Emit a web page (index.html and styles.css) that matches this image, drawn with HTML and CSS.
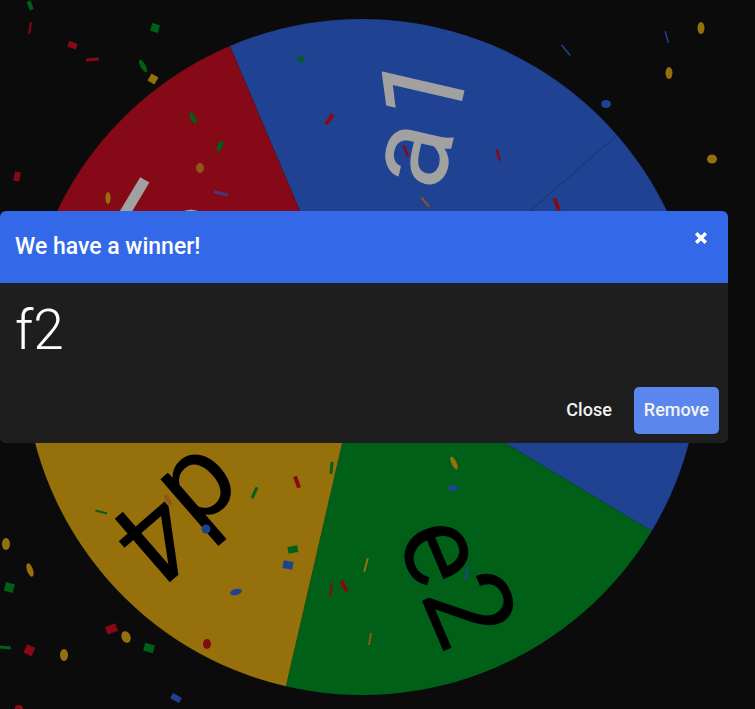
FILE: index.html
```html
<!DOCTYPE html>
<html lang="en">
<head>
<meta charset="utf-8">
<title>We have a winner!</title>
<link rel="stylesheet" href="styles.css">
</head>
<body>
<svg class="wheel" width="755" height="709" viewBox="0 0 755 709" xmlns="http://www.w3.org/2000/svg">
  <g class="segments">
    <path class="seg-blue" d="M362,357 L229.9,45.9 A338,338 0 0 1 617.1,135.2 Z"/>
    <path class="seg-blue" d="M362,357 L617.1,135.2 A338,338 0 0 1 651.7,531.1 Z"/>
    <path class="seg-green" d="M362,357 L651.7,531.1 A338,338 0 0 1 285.9,686.3 Z"/>
    <path class="seg-yellow" d="M362,357 L285.9,686.3 A338,338 0 0 1 25.3,386.5 Z"/>
    <path class="seg-red" d="M362,357 L25.3,386.5 A338,338 0 0 1 229.9,45.9 Z"/>
  </g>
  <g class="labels">
    <text class="lbl lbl-light" x="669" y="357" transform="rotate(283 362 357)">a1</text>
    <text class="lbl lbl-light" x="669" y="357" transform="rotate(355 362 357)">f2</text>
    <text class="lbl lbl-dark" x="669" y="357" transform="rotate(67 362 357)">e2</text>
    <text class="lbl lbl-dark" x="669" y="357" transform="rotate(139 362 357)">d4</text>
    <text class="lbl lbl-light" x="669" y="357" transform="rotate(211 362 357)">b1</text>
  </g>
  <g class="confetti">
    <rect class="c-g" x="28" y="1" width="4" height="9" transform="rotate(-20 30 5)"/>
    <rect class="c-r" x="29" y="22" width="2" height="12" transform="rotate(10 30 28)"/>
    <rect class="c-g" x="151" y="24" width="8" height="8" transform="rotate(15 155 28)"/>
    <rect class="c-r" x="68" y="42" width="9" height="6" transform="rotate(20 72 45)"/>
    <rect class="c-r" x="86" y="58" width="13" height="3" transform="rotate(-5 93 60)"/>
    <ellipse class="c-g" cx="143" cy="66" rx="2.5" ry="7" transform="rotate(-30 143 66)"/>
    <rect class="c-y" x="149" y="75" width="8" height="8" transform="rotate(30 153 79)"/>
    <ellipse class="c-g" cx="193" cy="118" rx="2.5" ry="6" transform="rotate(-25 193 118)"/>
    <ellipse class="c-g" cx="220" cy="146" rx="2.5" ry="6" transform="rotate(25 220 146)"/>
    <ellipse class="c-o" cx="200" cy="168" rx="4" ry="5"/>
    <rect class="c-r" x="14" y="172" width="6" height="9" transform="rotate(10 17 177)"/>
    <ellipse class="c-y" cx="108" cy="198" rx="2.5" ry="6"/>
    <rect class="c-p" x="214" y="192" width="14" height="3" transform="rotate(15 221 193)"/>
    <ellipse class="c-g" cx="301" cy="59" rx="4" ry="2.5"/>
    <rect class="c-r" x="327" y="113" width="4" height="12" transform="rotate(35 329 120)"/>
    <rect class="c-r" x="405" y="145" width="2.5" height="12" transform="rotate(-25 406 152)"/>
    <rect class="c-r" x="497" y="149" width="2.5" height="12" transform="rotate(-15 498 155)"/>
    <ellipse class="c-y" cx="701" cy="28" rx="3.5" ry="6"/>
    <ellipse class="c-y" cx="669" cy="73" rx="3.5" ry="6"/>
    <ellipse class="c-b" cx="606" cy="104" rx="5" ry="4"/>
    <ellipse class="c-y" cx="712" cy="159" rx="5" ry="4.5"/>
    <rect class="c-b" x="565" y="43" width="1.5" height="14" transform="rotate(-40 566 50)"/>
    <rect class="c-b" x="666" y="31" width="1.5" height="12" transform="rotate(-15 667 37)"/>
    <rect class="c-r" x="555" y="198" width="4" height="13" transform="rotate(-20 557 205)"/>
    <rect class="c-o" x="425" y="196" width="2" height="12" transform="rotate(-40 426 203)"/>

    <ellipse class="c-y" cx="6" cy="544" rx="4" ry="6"/>
    <ellipse class="c-y" cx="30" cy="570" rx="3" ry="7" transform="rotate(-20 30 570)"/>
    <rect class="c-g" x="5" y="583" width="9" height="9" transform="rotate(15 9 587)"/>
    <rect class="c-r" x="106" y="625" width="11" height="8" transform="rotate(-20 111 629)"/>
    <ellipse class="c-y" cx="126" cy="637" rx="4.5" ry="6" transform="rotate(-20 126 637)"/>
    <rect class="c-g" x="144" y="644" width="10" height="8" transform="rotate(15 149 648)"/>
    <rect class="c-r" x="25" y="646" width="9" height="9" transform="rotate(25 30 650)"/>
    <ellipse class="c-y" cx="64" cy="655" rx="4" ry="6"/>
    <rect class="c-g" x="0" y="646" width="11" height="3" transform="rotate(5 5 647)"/>
    <ellipse class="c-r" cx="207" cy="644" rx="4" ry="5"/>
    <rect class="c-b" x="171" y="695" width="10" height="6" transform="rotate(30 176 698)"/>
    <ellipse class="c-r" cx="19" cy="708" rx="4" ry="3"/>
    <ellipse class="c-b" cx="206" cy="529" rx="4.5" ry="4.5"/>
    <ellipse class="c-y" cx="227" cy="524" rx="4" ry="6" transform="rotate(-20 227 524)"/>
    <ellipse class="c-o" cx="168" cy="500" rx="2.5" ry="6" transform="rotate(-35 168 500)"/>
    <rect class="c-g" x="95" y="511" width="12" height="2" transform="rotate(15 101 513)"/>
    <rect class="c-r" x="295" y="476" width="4" height="12" transform="rotate(-20 297 482)"/>
    <rect class="c-g" x="253" y="487" width="3" height="12" transform="rotate(25 255 493)"/>
    <rect class="c-g" x="330" y="462" width="3" height="12" transform="rotate(5 332 468)"/>
    <rect class="c-g" x="288" y="546" width="10" height="7" transform="rotate(-10 293 550)"/>
    <rect class="c-b" x="283" y="561" width="10" height="8" transform="rotate(10 288 565)"/>
    <ellipse class="c-b" cx="236" cy="592" rx="6" ry="3" transform="rotate(-15 236 592)"/>
    <ellipse class="c-y" cx="454" cy="463" rx="2.5" ry="7" transform="rotate(-25 454 463)"/>
    <ellipse class="c-b" cx="453" cy="488" rx="5" ry="3" transform="rotate(-10 453 488)"/>
    <rect class="c-y" x="365" y="558" width="2" height="14" transform="rotate(15 366 565)"/>
    <rect class="c-b" x="466" y="566" width="2" height="14" transform="rotate(15 467 573)"/>
    <rect class="c-r" x="342" y="580" width="4" height="12" transform="rotate(-30 344 586)"/>
    <rect class="c-r" x="330" y="583" width="2" height="14" transform="rotate(10 331 590)"/>
    <rect class="c-o" x="369" y="633" width="2" height="12" transform="rotate(10 370 639)"/>
  </g>
</svg>

<div class="overlay"></div>

<div class="modal">
  <header class="modal-head">
    <h2 class="modal-title">We have a winner!</h2>
    <button class="close-x" aria-label="Close">
      <svg width="14" height="12" viewBox="0 0 14 12"><path d="M2.2 1.3 L11.8 10.7 M11.8 1.3 L2.2 10.7" stroke="#ffffff" stroke-width="3.6" fill="none"/></svg>
    </button>
  </header>
  <section class="modal-body">
    <div class="winner">f2</div>
    <footer class="modal-foot">
      <button class="btn btn-text">Close</button>
      <button class="btn btn-primary">Remove</button>
    </footer>
  </section>
</div>
</body>
</html>
```

FILE: styles.css
```css
html, body {
  margin: 0;
  padding: 0;
}

body {
  background: #121212;
  width: 755px;
  height: 709px;
  overflow: hidden;
  font-family: Roboto, "Liberation Sans", sans-serif;
}

.wheel {
  display: block;
}

.seg-blue { fill: #3369e8; stroke: rgba(0, 0, 0, 0.04); stroke-width: 1; }
.seg-red { fill: #d50f25; }
.seg-yellow { fill: #eeb211; }
.seg-green { fill: #009925; }

.lbl {
  font-family: Roboto, "Noto Sans", sans-serif;
  font-size: 118px;
  font-weight: 400;
  text-anchor: end;
  dominant-baseline: central;
}

.lbl-light { fill: #ffffff; }
.lbl-dark { fill: #000000; }

.c-r { fill: #d50f25; }
.c-g { fill: #009925; }
.c-y { fill: #eeb211; }
.c-o { fill: #e8862a; }
.c-b { fill: #3369e8; }
.c-p { fill: #7a5ac8; }

.overlay {
  position: fixed;
  inset: 0;
  background: rgba(0, 0, 0, 0.37);
}

.modal {
  position: fixed;
  left: 0;
  top: 211px;
  width: 728px;
  border-radius: 6px;
  overflow: hidden;
  background: #1e1e1e;
}

.modal-head {
  height: 72px;
  box-sizing: border-box;
  background: #3369e8;
  display: flex;
  align-items: center;
  justify-content: space-between;
  padding: 0 20px 2px 15px;
}

.modal-title {
  margin: 0;
  color: #ffffff;
  font-size: 23px;
  font-weight: 500;
  line-height: 1;
}

.close-x {
  align-self: flex-start;
  margin-top: 21px;
  padding: 0;
  border: 0;
  background: none;
  width: 14px;
  height: 12px;
  display: flex;
}

.modal-body {
  height: 160px;
  box-sizing: border-box;
  display: flex;
  flex-direction: column;
  padding: 20px 9px 9px 15px;
}

.winner {
  color: #ffffff;
  font-size: 55px;
  font-weight: 300;
  line-height: 1;
}

.modal-foot {
  margin-top: auto;
  display: flex;
  justify-content: flex-end;
  align-items: center;
  gap: 12px;
}

.btn {
  height: 47px;
  border: 0;
  border-radius: 5px;
  padding: 0 10px 3px;
  font-family: Roboto, "Liberation Sans", sans-serif;
  font-size: 18px;
  font-weight: 500;
  color: #f4f4f4;
  background: transparent;
}

.btn-primary {
  background: #5b86ee;
}
```
